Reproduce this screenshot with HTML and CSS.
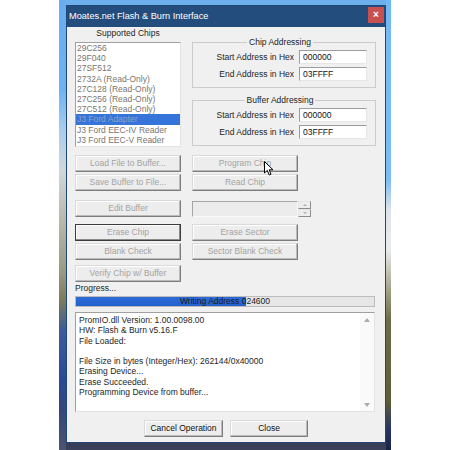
FILE: index.html
```html
<!DOCTYPE html>
<html lang="en">

<head>
  <meta charset="UTF-8" />
  <meta name="viewport" content="width=device-width, initial-scale=1.0" />
  <title>Moates.net Flash &amp; Burn Interface</title>
  <link rel="stylesheet" href="styles.css">
</head>

<body>
  <div class="screen">
    <div class="strip strip-left"></div>
    <div class="middle">
      <div class="dialog">
        <div class="titlebar">
          <span class="title">Moates.net Flash &amp; Burn Interface</span>
          <span class="close">&#215;</span>
        </div>
        <div class="client">
          <div class="top">
            <div class="chips">
              <div class="chips-label">Supported Chips</div>
              <ul class="chip-list">
                <li>29C256</li>
                <li>29F040</li>
                <li>27SF512</li>
                <li>2732A (Read-Only)</li>
                <li>27C128 (Read-Only)</li>
                <li>27C256 (Read-Only)</li>
                <li>27C512 (Read-Only)</li>
                <li class="selected">J3 Ford Adapter</li>
                <li>J3 Ford EEC-IV Reader</li>
                <li>J3 Ford EEC-V Reader</li>
              </ul>
            </div>
            <div class="addressing">
              <fieldset class="group">
                <legend>Chip Addressing</legend>
                <div class="field">
                  <label>Start Address in Hex</label>
                  <input class="hex" type="text" value="000000" readonly>
                </div>
                <div class="field">
                  <label>End Address in Hex</label>
                  <input class="hex" type="text" value="03FFFF" readonly>
                </div>
              </fieldset>
              <fieldset class="group group-buffer">
                <legend>Buffer Addressing</legend>
                <div class="field">
                  <label>Start Address in Hex</label>
                  <input class="hex" type="text" value="000000" readonly>
                </div>
                <div class="field">
                  <label>End Address in Hex</label>
                  <input class="hex" type="text" value="03FFFF" readonly>
                </div>
              </fieldset>
            </div>
          </div>

          <div class="btn-row row-1">
            <button class="btn">Load File to Buffer...</button>
            <div class="cursor-host">
              <button class="btn">Program Chip</button>
              <svg class="cursor" width="10" height="16" viewBox="0 0 10 16">
                <path d="M0.5 0.5 L0.5 12 L3.3 9.4 L5.2 14 L7 13.2 L5.2 8.8 L9 8.8 Z" fill="#fff" stroke="#000" stroke-width="1" stroke-linejoin="round" />
              </svg>
            </div>
          </div>
          <div class="btn-row">
            <button class="btn">Save Buffer to File...</button>
            <button class="btn">Read Chip</button>
          </div>
          <div class="btn-row row-3">
            <button class="btn">Edit Buffer</button>
            <div class="spin">
              <div class="spin-box"></div>
              <div class="spin-arrows">
                <span class="spin-btn"><i class="tri tri-up"></i></span>
                <span class="spin-btn"><i class="tri tri-down"></i></span>
              </div>
            </div>
          </div>
          <div class="btn-row row-4">
            <button class="btn btn-default">Erase Chip</button>
            <button class="btn">Erase Sector</button>
          </div>
          <div class="btn-row">
            <button class="btn">Blank Check</button>
            <button class="btn">Sector Blank Check</button>
          </div>
          <div class="btn-row row-6">
            <button class="btn">Verify Chip w/ Buffer</button>
          </div>

          <div class="progress-label">Progress...</div>
          <div class="progress">
            <div class="progress-fill" style="width: 57%"></div>
            <div class="progress-text">Writing Address 024600</div>
          </div>

          <div class="log">
            <div class="log-text">
              <div>PromIO.dll Version: 1.00.0098.00</div>
              <div>HW: Flash &amp; Burn v5.16.F</div>
              <div>File Loaded:</div>
              <div>&nbsp;</div>
              <div>File Size in bytes (Integer/Hex): 262144/0x40000</div>
              <div>Erasing Device...</div>
              <div>Erase Succeeded.</div>
              <div>Programming Device from buffer...</div>
            </div>
            <div class="scrollbar">
              <i class="tri tri-up"></i>
              <i class="tri tri-down"></i>
            </div>
          </div>

          <div class="actions">
            <button class="btn btn-on btn-cancel">Cancel Operation</button>
            <button class="btn btn-on btn-close">Close</button>
          </div>
        </div>
      </div>
    </div>
    <div class="strip strip-right"></div>
  </div>
</body>

</html>
```

FILE: styles.css
```css
* {
  box-sizing: border-box;
}

body {
  margin: 0;
  background: #fff;
  font-family: "Liberation Sans", Arial, sans-serif;
  font-size: 8.5px;
  color: #1e1e1e;
}

.screen {
  display: flex;
  width: 332px;
  height: 450px;
  margin-left: 59px;
}

.strip {
  height: 100%;
}

.strip-left {
  width: 7px;
  background: linear-gradient(to bottom, #69adf0 0, #6fb2f1 90px, #a9cdee 130px, #d0d8dc 170px, #b8b8ac 220px, #9a9a88 270px, #7c7c5a 300px, #3d5a9a 330px, #2b4a96 380px, #34467a 410px, #4a5570 450px);
}

.strip-right {
  width: 5px;
  background: linear-gradient(to bottom, #72b8f4 0, #7bbef6 180px, #dde4ea 210px, #e8ecee 250px, #b5b39e 280px, #6e6c45 320px, #5f5d38 400px, #263462 430px, #1c2444 450px);
}

.middle {
  width: 320px;
  padding: 5px 0 7px;
  background: linear-gradient(to bottom, #6cb1ee 0, #6cb1ee 10px, #2e3856 430px, #3a4058 450px);
}

.dialog {
  display: flex;
  flex-direction: column;
  height: 438px;
  border: 1px solid #1f4778;
  background: #f0f0f0;
}

.titlebar {
  display: flex;
  justify-content: space-between;
  align-items: center;
  height: 21px;
  padding: 0 1px 0 2px;
  background: #234d7d;
  color: #fff;
}

.title {
  font-size: 9.2px;
  margin-top: -1px;
}

.close {
  display: flex;
  align-self: flex-start;
  justify-content: center;
  align-items: center;
  width: 16px;
  height: 16px;
  margin-top: 1px;
  background: #c75050;
  font-size: 10px;
  font-weight: bold;
  line-height: 1;
}

.client {
  flex: 1;
  padding: 0 8px;
}

.top {
  display: flex;
}

.chips {
  width: 106px;
}

.chips-label {
  margin-top: 1px;
  line-height: 10px;
  text-align: center;
}

.chip-list {
  height: 105px;
  margin: 4px 0 0;
  padding: 0;
  list-style: none;
  background: #fff;
  border: 1px solid;
  border-color: #a0a0a0 #e3e3e3 #e3e3e3 #a0a0a0;
}

.chip-list li {
  padding-left: 1px;
  line-height: 10.2px;
  color: #7a756f;
  white-space: nowrap;
}

.chip-list li.selected {
  background: #3574d8;
  color: #8ea3c6;
}

.addressing {
  width: 184px;
  margin-top: 10px;
  margin-left: 11px;
}

.group {
  min-width: 0;
  margin: 0;
  padding: 3px 8px 6px 0;
  border: 1px solid #cbcbcb;
}

.group legend {
  margin: 0 auto;
  padding: 0 2px;
  line-height: 10px;
}

.group-buffer {
  margin-top: 7px;
}

.field {
  display: flex;
  justify-content: flex-end;
  align-items: center;
  gap: 5px;
  height: 14px;
}

.field + .field {
  margin-top: 3px;
}

.field label {
  white-space: nowrap;
}

.hex {
  width: 68px;
  height: 14px;
  padding: 0 3px;
  font: inherit;
  color: #111;
  background: #fff;
  border: 1px solid;
  border-color: #9c9c9c #e6e6e6 #e6e6e6 #9c9c9c;
  outline: none;
}

.btn-row {
  display: flex;
  align-items: flex-start;
  gap: 11px;
  margin-top: 2px;
}

.btn-row.row-1 {
  margin-top: 8px;
}

.btn-row.row-3 {
  margin-top: 9px;
}

.btn-row.row-4 {
  margin-top: 7px;
}

.btn-row.row-6 {
  margin-top: 5px;
}

.btn {
  width: 106px;
  height: 17px;
  padding: 0;
  font: inherit;
  line-height: 15px;
  color: #a3a3a3;
  background: #ededed;
  border: 1px solid;
  border-color: #dadada #7d7d7d #7d7d7d #dadada;
  box-shadow: inset -1px -1px #bababa, inset 1px 1px #fff;
  white-space: nowrap;
}

.btn-default {
  border-color: #3c3c3c;
  box-shadow: inset -1px -1px #8a8a8a, inset 1px 1px #fff;
}

.cursor-host {
  position: relative;
  width: 106px;
}

.cursor {
  position: absolute;
  left: 72px;
  top: 6px;
}

.spin {
  display: flex;
  margin-top: 1px;
}

.spin-box {
  width: 106px;
  height: 16px;
  background: #ececec;
  border: 1px solid;
  border-color: #a6a6a6 #fafafa #fafafa #a6a6a6;
}

.spin-arrows {
  display: flex;
  flex-direction: column;
  width: 13px;
}

.spin-btn {
  display: flex;
  justify-content: center;
  align-items: center;
  height: 8px;
  background: #ededed;
  border: 1px solid;
  border-color: #e4e4e4 #8d8d8d #8d8d8d #e4e4e4;
}

.tri {
  display: block;
  width: 0;
  height: 0;
  border-left: 3px solid transparent;
  border-right: 3px solid transparent;
}

.tri-up {
  border-bottom: 3px solid #b0b0b0;
}

.tri-down {
  border-top: 3px solid #b0b0b0;
}

.spin-btn .tri {
  border-left-width: 2px;
  border-right-width: 2px;
}

.spin-btn .tri-up {
  border-bottom-width: 2px;
}

.spin-btn .tri-down {
  border-top-width: 2px;
}

.progress-label {
  margin-top: 1px;
  line-height: 10px;
}

.progress {
  display: grid;
  width: 300px;
  height: 11px;
  margin-top: 3px;
  background: #e6e6e6;
  border: 1px solid #bcbcbc;
}

.progress-fill,
.progress-text {
  grid-area: 1 / 1;
}

.progress-fill {
  background: linear-gradient(to bottom, #2e6bd6, #2461cc);
}

.progress-text {
  line-height: 9px;
  text-align: center;
  color: #1a1a1a;
}

.log {
  display: flex;
  width: 300px;
  height: 100px;
  margin-top: 5px;
  background: #fff;
  border: 1px solid;
  border-color: #a0a0a0 #e3e3e3 #e3e3e3 #a0a0a0;
}

.log-text {
  flex: 1;
  padding: 2px 3px;
  line-height: 10.3px;
  white-space: nowrap;
}

.scrollbar {
  display: flex;
  flex-direction: column;
  justify-content: space-between;
  align-items: center;
  width: 14px;
  padding: 5px 0 4px;
  background: #fafafa;
}

.scrollbar .tri {
  border-left-width: 3.5px;
  border-right-width: 3.5px;
}

.scrollbar .tri-up {
  border-bottom: 4px solid #ababab;
}

.scrollbar .tri-down {
  border-top: 4px solid #ababab;
}

.actions {
  display: flex;
  justify-content: center;
  gap: 7px;
  margin-top: 8px;
}

.btn-on {
  color: #111;
}

.btn-cancel {
  width: 79px;
}

.btn-close {
  width: 78px;
}
```
